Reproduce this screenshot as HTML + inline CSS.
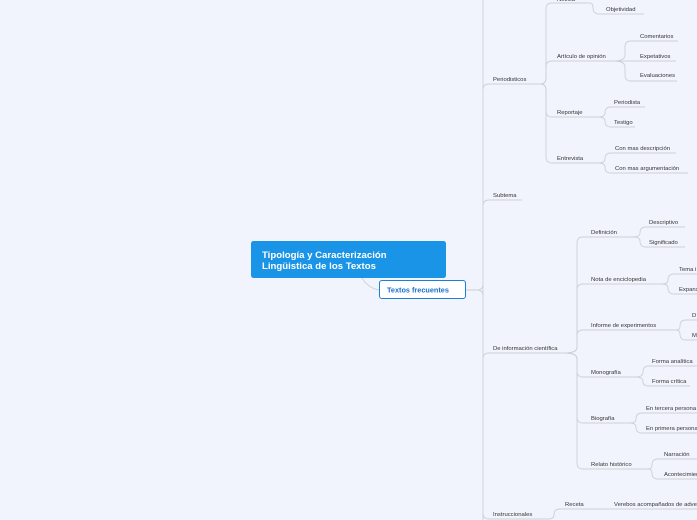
<!DOCTYPE html>
<html><head><meta charset="utf-8"><style>
html,body{margin:0;padding:0;background:#f2f4fd;width:697px;height:520px;overflow:hidden}
svg{display:block}
text{font-family:"Liberation Sans",sans-serif;font-size:5.9px;fill:#333}
.l{fill:none;stroke:#cdd0d8;stroke-width:0.9}
</style></head><body>
<svg width="697" height="520" viewBox="0 0 697 520" xmlns="http://www.w3.org/2000/svg">
<rect width="697" height="520" fill="#f2f4fd"/>
<path class="l" d="M483 0 V520" stroke-width="1.4"/>
<path class="l" d="M466 290 H477 Q483 290 483 284" stroke-width="1.4"/>
<path class="l" d="M466 290 H477 Q483 290 483 296" stroke-width="1.4"/>
<path class="l" d="M362 278 Q368 288 379 290"/>
<path class="l" d="M483 90 Q483 84 489 84 H540"/>
<path class="l" d="M483 206 Q483 200 489 200 H522"/>
<path class="l" d="M483 359 Q483 353 489 353 H565"/>
<path class="l" d="M483 513 Q483 519 489 519 H548"/>
<path class="l" d="M540 84 Q546 84 546 78 V9 Q546 3 552 3 H590"/>
<path class="l" d="M540 84 Q546 84 546 78 V67 Q546 61 552 61 H613"/>
<path class="l" d="M540 84 Q546 84 546 90 V111 Q546 117 552 117 H598"/>
<path class="l" d="M540 84 Q546 84 546 90 V157 Q546 163 552 163 H598"/>
<path class="l" d="M590 3 Q593 3 593 8 Q593 14 600 14 H644"/>
<path class="l" d="M613 61 Q625 61 625 55 V47 Q625 41 631 41 H678"/>
<path class="l" d="M613 61 H676"/>
<path class="l" d="M613 61 Q625 61 625 67 V75 Q625 81 631 81 H677"/>
<path class="l" d="M598 117 Q605 117 605 113 Q605 107 611 107 H645"/>
<path class="l" d="M598 117 Q605 117 605 121 Q605 127 611 127 H635"/>
<path class="l" d="M598 163 Q605 163 605 159 Q605 153 611 153 H676"/>
<path class="l" d="M598 163 Q605 163 605 167 Q605 173 611 173 H688"/>
<path class="l" d="M565 353 Q577 353 577 347 V243 Q577 237 583 237 H633"/>
<path class="l" d="M565 353 Q577 353 577 347 V290 Q577 284 583 284 H662"/>
<path class="l" d="M565 353 Q577 353 577 347 V336 Q577 330 583 330 H676"/>
<path class="l" d="M565 353 Q577 353 577 359 V371 Q577 377 583 377 H636"/>
<path class="l" d="M565 353 Q577 353 577 359 V417 Q577 423 583 423 H630"/>
<path class="l" d="M565 353 Q577 353 577 359 V463 Q577 469 583 469 H648"/>
<path class="l" d="M633 237 Q640 237 640 233 Q640 227 646 227 H685"/>
<path class="l" d="M633 237 Q640 237 640 241 Q640 247 646 247 H685"/>
<path class="l" d="M662 284 Q668 284 668 280 Q668 274 674 274 H697"/>
<path class="l" d="M662 284 Q668 284 668 288 Q668 294 674 294 H697"/>
<path class="l" d="M676 330 Q680 330 680 326 Q680 320 686 320 H697"/>
<path class="l" d="M676 330 Q680 330 680 334 Q680 340 686 340 H697"/>
<path class="l" d="M636 377 Q643 377 643 372 Q643 366 649 366 H697"/>
<path class="l" d="M636 377 Q643 377 643 382 Q643 386 649 386 H690"/>
<path class="l" d="M630 423 Q636 423 636 419 Q636 413 642 413 H697"/>
<path class="l" d="M630 423 Q636 423 636 427 Q636 433 642 433 H697"/>
<path class="l" d="M648 469 Q652 469 652 465 Q652 459 658 459 H697"/>
<path class="l" d="M648 469 Q652 469 652 473 Q652 479 658 479 H697"/>
<path class="l" d="M548 519 Q554 519 554 515 Q554 509 560 509 H697"/>

<rect x="251" y="241" width="195" height="37" rx="2.5" fill="#1a94e6"/>
<text x="262" y="258" style="font-size:9.6px;font-weight:bold;fill:#fff">Tipología y Caracterización</text>
<text x="262" y="269" style="font-size:9.6px;font-weight:bold;fill:#fff">Lingüistica de los Textos</text>
<rect x="379.5" y="280.5" width="86" height="18" rx="2.5" fill="#fff" stroke="#1a7fd6" stroke-width="1"/>
<text x="387" y="292.5" style="font-size:7.3px;font-weight:bold;fill:#1a6fc8">Textos frecuentes</text>

<text x="493" y="81">Periodisticos</text>
<text x="493" y="197">Subtema</text>
<text x="493" y="350">De información científica</text>
<text x="493" y="516">Instruccionales</text>

<text x="557" y="1">Noticia</text>
<text x="606" y="11">Objetividad</text>
<text x="557" y="58">Artículo de opinión</text>
<text x="557" y="114">Reportaje</text>
<text x="557" y="160">Entrevista</text>
<text x="640" y="38">Comentarios</text>
<text x="640" y="58">Expetativos</text>
<text x="640" y="77">Evaluaciones</text>
<text x="614" y="104">Periodista</text>
<text x="614" y="124">Testigo</text>
<text x="615" y="150">Con mas descripción</text>
<text x="615" y="170">Con mas argumentación</text>

<text x="591" y="234">Definición</text>
<text x="591" y="281">Nota de enciclopedia</text>
<text x="591" y="327">Informe de experimentos</text>
<text x="591" y="374">Monografía</text>
<text x="591" y="420">Biografía</text>
<text x="591" y="466">Relato histórico</text>
<text x="649" y="224">Descriptivo</text>
<text x="649" y="244">Significado</text>
<text x="679" y="271">Tema i</text>
<text x="679" y="291">Expansión</text>
<text x="692" y="317">D</text>
<text x="692" y="337">M</text>
<text x="652" y="363">Forma analítica</text>
<text x="652" y="383">Forma crítica</text>
<text x="646" y="410">En tercera persona</text>
<text x="646" y="430">En primera persona</text>
<text x="664" y="456">Narración</text>
<text x="664" y="476">Acontecimientos</text>
<text x="565" y="506">Receta</text>
<text x="614" y="506">Verebos acompañados de adverbios</text>
</svg>
</body></html>
